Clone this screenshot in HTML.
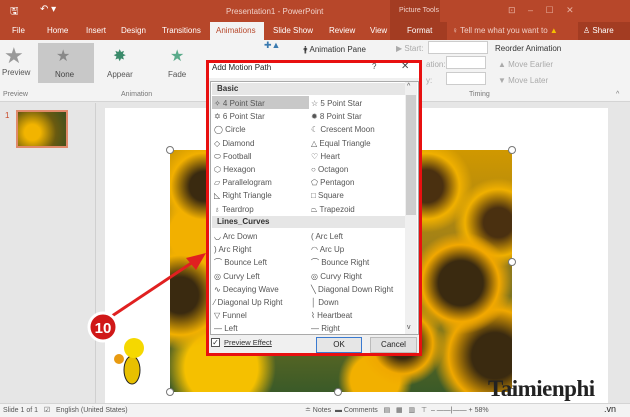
<!DOCTYPE html>
<html><head><meta charset="utf-8"><style>
*{margin:0;padding:0;box-sizing:border-box}
body{width:630px;height:417px;overflow:hidden;font-family:"Liberation Sans",sans-serif;font-size:8px;color:#333;background:#e6e6e6;position:relative}
.a{position:absolute;white-space:nowrap}
.w{color:#fff}
</style></head><body>
<div class="a" style="left:0;top:0;width:630px;height:40px;background:#b7472a"></div>
<div class="a w" style="left:226px;top:7px;font-size:8px;color:#f0d0c8">Presentation1 - PowerPoint</div>
<div class="a" style="left:390px;top:0;width:50px;height:40px;background:#a33c22"></div>
<div class="a w" style="left:399px;top:7px;font-size:7px;color:#f0d0c8">Picture Tools</div>
<div class="a w" style="left:10px;top:4px;font-size:10px">🖫</div>
<div class="a w" style="left:40px;top:4px;font-size:10px">↶ ▾</div>
<div class="a w" style="left:508px;top:5px;font-size:9px;color:#e8b0a0">⊡ &nbsp; &nbsp; – &nbsp; &nbsp; ☐ &nbsp; &nbsp; ✕</div>
<div class="a w" style="left:12px;top:26px;font-size:8px">File</div>
<div class="a w" style="left:47px;top:26px">Home</div>
<div class="a w" style="left:86px;top:26px">Insert</div>
<div class="a w" style="left:121px;top:26px">Design</div>
<div class="a w" style="left:162px;top:26px">Transitions</div>
<div class="a" style="left:210px;top:22px;width:54px;height:18px;background:#f3f3f3"></div>
<div class="a" style="left:216px;top:26px;color:#b7472a">Animations</div>
<div class="a w" style="left:273px;top:26px">Slide Show</div>
<div class="a w" style="left:329px;top:26px">Review</div>
<div class="a w" style="left:370px;top:26px">View</div>
<div class="a" style="left:397px;top:22px;width:50px;height:18px;background:#a33c22"></div>
<div class="a w" style="left:407px;top:26px">Format</div>
<div class="a w" style="left:452px;top:26px;color:#f0d0c8">♀ Tell me what you want to <span style="color:#f5c000">▲</span></div>
<div class="a" style="left:578px;top:22px;width:52px;height:18px;background:#a33c22"></div>
<div class="a w" style="left:583px;top:26px">♙ Share</div>
<div class="a" style="left:0;top:40px;width:630px;height:62px;background:#f3f3f3;border-bottom:1px solid #d4d4d4"></div>
<div class="a" style="left:4px;top:43px;font-size:22px;color:#999">★</div>
<div class="a" style="left:2px;top:68px;color:#555">Preview</div>
<div class="a" style="left:3px;top:91px;font-size:7px;color:#777">Preview</div>
<div class="a" style="left:38px;top:43px;width:56px;height:40px;background:#c8c8c8"></div>
<div class="a" style="left:56px;top:46px;font-size:16px;color:#888">★</div>
<div class="a" style="left:55px;top:70px;color:#444">None</div>
<div class="a" style="left:113px;top:46px;font-size:16px;color:#3a8a6a">✸</div>
<div class="a" style="left:107px;top:70px;color:#555">Appear</div>
<div class="a" style="left:170px;top:46px;font-size:16px;color:#5aaa8a">★</div>
<div class="a" style="left:168px;top:70px;color:#555">Fade</div>
<div class="a" style="left:121px;top:91px;font-size:7px;color:#777">Animation</div>
<div class="a" style="left:264px;top:40px;font-size:9px;color:#3a7ab0">✚▲</div>
<div class="a" style="left:303px;top:44px;color:#333">🛉 Animation Pane</div>
<div class="a" style="left:396px;top:44px;color:#aaa">▶ Start:</div>
<div class="a" style="left:428px;top:41px;width:60px;height:13px;background:#fff;border:1px solid #ccc"></div>
<div class="a" style="left:446px;top:56px;width:40px;height:13px;background:#fff;border:1px solid #ccc"></div>
<div class="a" style="left:446px;top:72px;width:40px;height:13px;background:#fff;border:1px solid #ccc"></div>
<div class="a" style="left:426px;top:60px;color:#aaa">ation:</div>
<div class="a" style="left:426px;top:76px;color:#aaa">y:</div>
<div class="a" style="left:469px;top:91px;font-size:7px;color:#777">Timing</div>
<div class="a" style="left:495px;top:44px;color:#333">Reorder Animation</div>
<div class="a" style="left:498px;top:60px;color:#aaa">▲ Move Earlier</div>
<div class="a" style="left:498px;top:76px;color:#aaa">▼ Move Later</div>
<div class="a" style="left:616px;top:91px;font-size:7px;color:#777">^</div>
<div class="a" style="left:0;top:103px;width:96px;height:300px;background:#e6e6e6;border-right:1px solid #d0d0d0"></div>
<div class="a" style="left:5px;top:111px;color:#c84a2a">1</div>
<div class="a" style="left:16px;top:110px;width:52px;height:38px;border:2px solid #e08a6a;background:radial-gradient(circle at 30% 60%,#f2b400 20%,#6a5a10 60%,#3a5020)"></div>
<div class="a" style="left:105px;top:108px;width:503px;height:302px;background:#fff"></div>
<div class="a" style="left:170px;top:150px;width:342px;height:242px;background:
radial-gradient(circle at 10% 15%,#3a2a10 4%,#f2b000 9%,transparent 13%),
radial-gradient(circle at 3% 60%,#3a2a10 5%,#f2b000 11%,transparent 15%),
radial-gradient(circle at 85% 55%,#3a2a10 7%,#f2a800 12%,transparent 16%),
radial-gradient(circle at 75% 15%,#4a3010 5%,#f0b000 10%,transparent 14%),
radial-gradient(circle at 95% 85%,#3a2a10 6%,#f0a800 12%,transparent 16%),
radial-gradient(circle at 68% 80%,#3a2a10 5%,#f0a800 10%,transparent 14%),
radial-gradient(circle at 15% 90%,#f5c000 10%,transparent 15%),
radial-gradient(circle at 60% 95%,#f2b000 8%,transparent 12%),
radial-gradient(circle at 96% 30%,#4a3010 4%,#f0b000 9%,transparent 12%),
radial-gradient(circle at 8% 35%,#f2b000 8%,transparent 11%),
linear-gradient(#d09800,#a08018 40%,#3a5a28)"></div>
<div class="a" style="left:166px;top:146px;width:8px;height:8px;border-radius:50%;background:#fff;border:1px solid #777"></div>
<div class="a" style="left:508px;top:146px;width:8px;height:8px;border-radius:50%;background:#fff;border:1px solid #777"></div>
<div class="a" style="left:508px;top:258px;width:8px;height:8px;border-radius:50%;background:#fff;border:1px solid #777"></div>
<div class="a" style="left:166px;top:388px;width:8px;height:8px;border-radius:50%;background:#fff;border:1px solid #777"></div>
<div class="a" style="left:334px;top:388px;width:8px;height:8px;border-radius:50%;background:#fff;border:1px solid #777"></div>
<div class="a" style="left:508px;top:388px;width:8px;height:8px;border-radius:50%;background:#fff;border:1px solid #777"></div>
<svg class="a" style="left:0;top:0" width="630" height="417"><line x1="112" y1="316" x2="196" y2="260" stroke="#e02020" stroke-width="3"/><polygon points="206,253 186,258 196,270" fill="#e02020"/><circle cx="103" cy="327" r="14" fill="#d01818" stroke="#fff" stroke-width="3"/><text x="103" y="333" font-family="Liberation Sans" font-weight="bold" font-size="15" fill="#fff" text-anchor="middle">10</text><ellipse cx="132" cy="370" rx="8" ry="14" fill="#e8c000" stroke="#222" stroke-width="1"/><circle cx="134" cy="348" r="10" fill="#f5d800"/><circle cx="119" cy="359" r="5" fill="#e89a10"/></svg>
<div class="a" style="left:206px;top:60px;width:216px;height:296px;border:3px solid #e81010;background:#f0f0f0"></div>
<div class="a" style="left:209px;top:63px;width:210px;height:15px;background:#fff"></div>
<div class="a" style="left:212px;top:63px;font-size:8px;color:#222">Add Motion Path</div>
<div class="a" style="left:372px;top:62px;color:#444">?</div>
<div class="a" style="left:401px;top:61px;font-size:10px;color:#444">✕</div>
<div class="a" style="left:210px;top:81px;width:209px;height:254px;background:#fff;border:1px solid #aaa"></div>
<div class="a" style="left:405px;top:82px;width:12px;height:252px;background:#f0f0f0"></div>
<div class="a" style="left:406px;top:95px;width:10px;height:120px;background:#cdcdcd"></div>
<div class="a" style="left:407px;top:83px;font-size:7px;color:#555">^</div>
<div class="a" style="left:407px;top:324px;font-size:7px;color:#555">v</div>
<div class="a" style="left:212px;top:83px;width:193px;height:12px;background:#e6e6e6"></div>
<div class="a" style="left:217px;top:84px;font-weight:bold;color:#333">Basic</div>
<div class="a" style="left:212px;top:96px;width:97px;height:13px;background:#c8c8c8"></div>
<div class="a" style="left:212px;top:216px;width:193px;height:12px;background:#e6e6e6"></div>
<div class="a" style="left:217px;top:217px;font-weight:bold;color:#333">Lines_Curves</div>
<div class="a" style="left:214px;top:97px;line-height:13.2px;color:#555">
✧ 4 Point Star<br>✡ 6 Point Star<br>◯ Circle<br>◇ Diamond<br>⬭ Football<br>⬡ Hexagon<br>▱ Parallelogram<br>◺ Right Triangle<br>♁ Teardrop</div>
<div class="a" style="left:311px;top:97px;line-height:13.2px;color:#555">
☆ 5 Point Star<br>✹ 8 Point Star<br>☾ Crescent Moon<br>△ Equal Triangle<br>♡ Heart<br>○ Octagon<br>⬠ Pentagon<br>□ Square<br>⏢ Trapezoid</div>
<div class="a" style="left:214px;top:230px;line-height:13.2px;color:#555">
◡ Arc Down<br>) Arc Right<br>⌒ Bounce Left<br>◎ Curvy Left<br>∿ Decaying Wave<br>⁄ Diagonal Up Right<br>▽ Funnel<br>— Left</div>
<div class="a" style="left:311px;top:230px;line-height:13.2px;color:#555">
( Arc Left<br>◠ Arc Up<br>⌒ Bounce Right<br>◎ Curvy Right<br>╲ Diagonal Down Right<br>│ Down<br>⌇ Heartbeat<br>— Right</div>
<div class="a" style="left:211px;top:338px;width:9px;height:9px;border:1px solid #555;background:#fff;font-size:8px;line-height:7px;text-align:center">✓</div>
<div class="a" style="left:224px;top:338px;color:#333;text-decoration:underline;font-size:7.5px">Preview Effect</div>
<div class="a" style="left:316px;top:337px;width:46px;height:16px;border:1px solid #3a7ad0;background:#e6e6e6;text-align:center;line-height:14px;color:#222">OK</div>
<div class="a" style="left:370px;top:337px;width:47px;height:16px;border:1px solid #bbb;background:#e1e1e1;text-align:center;line-height:14px;color:#222">Cancel</div>
<div class="a" style="left:0;top:403px;width:630px;height:14px;background:#f3f3f3;border-top:1px solid #d4d4d4"></div>
<div class="a" style="left:3px;top:406px;font-size:7px;color:#555">Slide 1 of 1 &nbsp; ☑ &nbsp; English (United States)</div>
<div class="a" style="left:305px;top:406px;font-size:7px;color:#555">≐ Notes &nbsp;▬ Comments &nbsp; ▤ &nbsp; ▦ &nbsp; ▥ &nbsp; ⊤ &nbsp;– ——|—— + 58%</div>
<div class="a" style="left:488px;top:376px;font-size:23px;font-weight:bold;color:#222;letter-spacing:-0.5px;font-family:'Liberation Serif',serif">Taimienphi</div>
<div class="a" style="left:604px;top:404px;font-size:9px;color:#222">.vn</div>
</body></html>
